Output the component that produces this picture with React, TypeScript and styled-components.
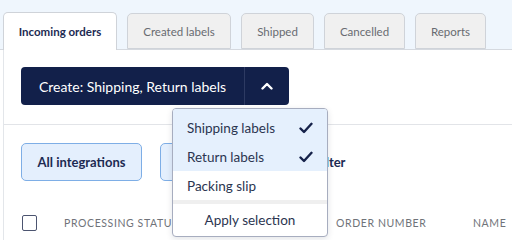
import React from "react";
import styled, { createGlobalStyle } from "styled-components";

const GlobalStyle = createGlobalStyle`
  html, body {
    margin: 0;
    padding: 0;
    background: #ffffff;
    font-family: "Lato", "Open Sans", sans-serif;
    overflow: hidden;
  }
`;

const Page = styled.div`
  width: 512px;
  height: 240px;
  overflow: hidden;
`;

const TabBar = styled.div`
  display: flex;
  align-items: flex-end;
  gap: 10px;
  height: 49px;
  padding-left: 3px;
  background: #eff6fd;
  border-bottom: 1px solid #d5d9df;
`;

const Tab = styled.div<{ $active?: boolean; $width: number }>`
  display: flex;
  align-items: center;
  justify-content: center;
  box-sizing: border-box;
  width: ${(p) => p.$width}px;
  height: ${(p) => (p.$active ? "38px" : "36px")};
  margin-bottom: ${(p) => (p.$active ? "-1px" : "0")};
  border: 1px solid #cfd3d9;
  border-bottom: ${(p) => (p.$active ? "none" : "1px solid #cfd3d9")};
  border-radius: 5px 5px 0 0;
  background: ${(p) => (p.$active ? "#ffffff" : "#f0f0f0")};
  color: ${(p) => (p.$active ? "#1c2a52" : "#686b71")};
  font-size: 11.5px;
  font-weight: ${(p) => (p.$active ? 700 : 400)};
  white-space: nowrap;
`;

const Panel = styled.div`
  margin-left: 3px;
  border-left: 1px solid #e3e6ea;
  height: 200px;
`;

const Toolbar = styled.div`
  padding: 17px 0 19px 17px;
  border-bottom: 1px solid #e2e4e8;
`;

const SplitWrap = styled.div`
  position: relative;
  display: inline-flex;
`;

const SplitButton = styled.div`
  display: flex;
  height: 38px;
  border-radius: 4px;
  background: #12204a;
  color: #ffffff;
  overflow: hidden;
`;

const MainAction = styled.div`
  display: flex;
  align-items: center;
  justify-content: center;
  box-sizing: border-box;
  width: 224px;
  font-size: 14px;
  white-space: nowrap;
  border-right: 1px solid #2d3a62;
`;

const Toggle = styled.div`
  display: flex;
  align-items: center;
  justify-content: center;
  width: 44px;
`;

const Menu = styled.div`
  position: absolute;
  top: 41px;
  left: 151px;
  width: 156px;
  box-sizing: border-box;
  border: 1px solid #a7adbf;
  border-radius: 4px;
  background: #ffffff;
  box-shadow: 0 2px 6px rgba(20, 30, 60, 0.12);
  overflow: hidden;
  z-index: 5;
`;

const MenuItem = styled.div<{ $selected?: boolean; $first?: boolean }>`
  display: flex;
  align-items: center;
  justify-content: space-between;
  box-sizing: border-box;
  height: ${(p) => (p.$first ? "33px" : "29px")};
  padding: ${(p) => (p.$first ? "4px" : "0")} 14px 0 14px;
  background: ${(p) => (p.$selected ? "#e5f0fd" : "#ffffff")};
  color: #2b3550;
  font-size: 13.5px;
`;

const MenuDivider = styled.div`
  height: 4px;
  background: #efefef;
`;

const ApplyButton = styled.div`
  display: flex;
  align-items: center;
  justify-content: center;
  height: 32px;
  color: #2b3550;
  font-size: 13.5px;
`;

const FilterRow = styled.div`
  display: flex;
  align-items: center;
  gap: 18px;
  padding: 18px 0 0 17px;
`;

const FilterButton = styled.div<{ $width: number }>`
  display: flex;
  align-items: center;
  justify-content: center;
  box-sizing: border-box;
  width: ${(p) => p.$width}px;
  height: 38px;
  border: 1px solid #7eaee6;
  border-radius: 5px;
  background: #e4effd;
  color: #1c2a52;
  font-size: 13px;
  font-weight: 700;
`;

const FilterLink = styled.div`
  margin-left: 16px;
  color: #1c2a52;
  font-size: 13px;
  font-weight: 700;
`;

const TableHead = styled.div`
  display: grid;
  grid-template-columns: 42px 272px 137px 40px;
  align-items: center;
  padding: 34px 0 0 18px;
`;

const Checkbox = styled.div`
  width: 15px;
  height: 16px;
  box-sizing: border-box;
  border: 1.5px solid #4c5470;
  border-radius: 2px;
`;

const HeadCell = styled.div`
  color: #707379;
  font-size: 10.5px;
  letter-spacing: 0.6px;
  text-transform: uppercase;
  white-space: nowrap;
`;

const Check = () => (
  <svg width="14" height="12" viewBox="0 0 14 12">
    <path d="M1.5 6.5 L5 10 L12.5 1.8" fill="none" stroke="#16224a" strokeWidth="2.4" strokeLinecap="round" strokeLinejoin="round" />
  </svg>
);

const ChevronUp = () => (
  <svg width="12" height="8" viewBox="0 0 12 8">
    <path d="M1.5 6.5 L6 2 L10.5 6.5" fill="none" stroke="#ffffff" strokeWidth="2.4" strokeLinecap="round" strokeLinejoin="round" />
  </svg>
);

const tabs = [
  { label: "Incoming orders", width: 114 },
  { label: "Created labels", width: 104 },
  { label: "Shipped", width: 73 },
  { label: "Cancelled", width: 81 },
  { label: "Reports", width: 71 },
];

const App: React.FC = () => {
  return (
    <Page>
      <GlobalStyle />
      <TabBar>
        {tabs.map((t, i) => (
          <Tab key={t.label} $active={i === 0} $width={t.width}>
            {t.label}
          </Tab>
        ))}
      </TabBar>
      <Panel>
        <Toolbar>
          <SplitWrap>
            <SplitButton>
              <MainAction>Create: Shipping, Return labels</MainAction>
              <Toggle>
                <ChevronUp />
              </Toggle>
            </SplitButton>
            <Menu>
              <MenuItem $selected $first>
                Shipping labels <Check />
              </MenuItem>
              <MenuItem $selected>
                Return labels <Check />
              </MenuItem>
              <MenuItem>Packing slip</MenuItem>
              <MenuDivider />
              <ApplyButton>Apply selection</ApplyButton>
            </Menu>
          </SplitWrap>
        </Toolbar>
        <FilterRow>
          <FilterButton $width={121}>All integrations</FilterButton>
          <FilterButton $width={121}>All statuses</FilterButton>
          <FilterLink>Filter</FilterLink>
        </FilterRow>
        <TableHead>
          <Checkbox />
          <HeadCell>Processing status</HeadCell>
          <HeadCell>Order number</HeadCell>
          <HeadCell>Name</HeadCell>
        </TableHead>
      </Panel>
    </Page>
  );
};

export default App;
